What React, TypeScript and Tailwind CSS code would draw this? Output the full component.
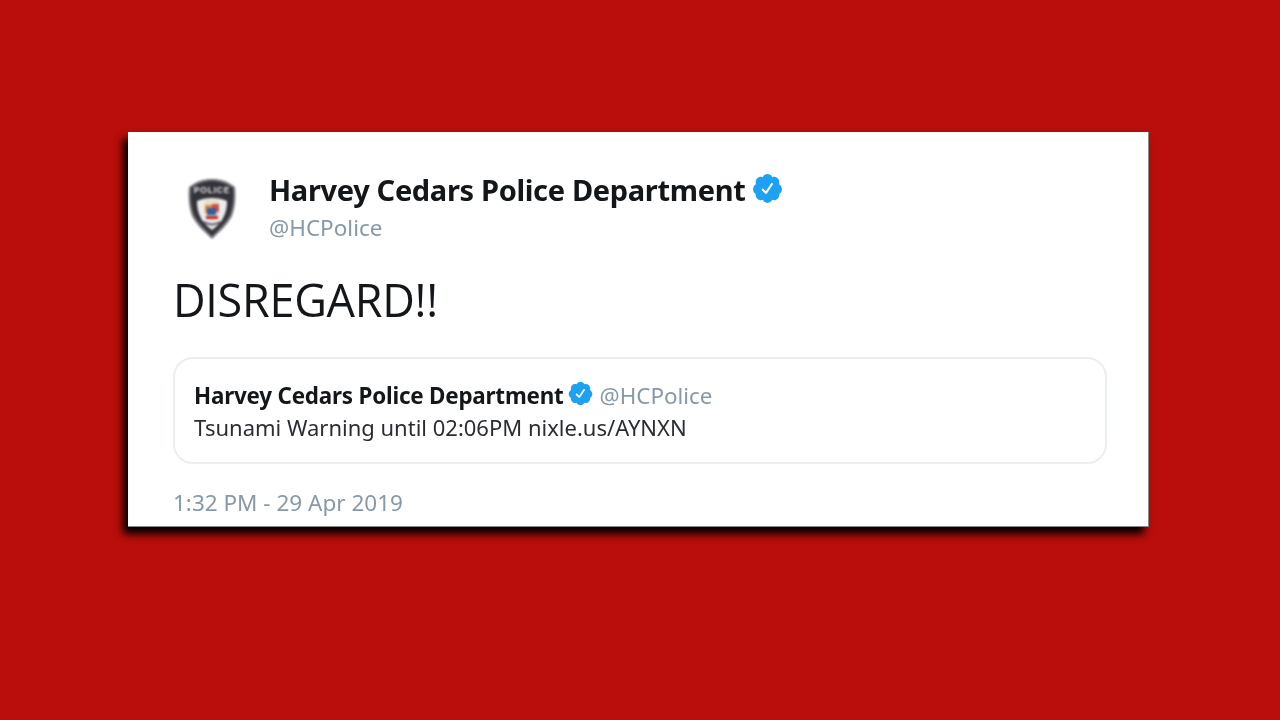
const BADGE = "M22.5 12.5c0-1.58-.875-2.95-2.148-3.6.154-.435.238-.905.238-1.4 0-2.21-1.71-3.998-3.818-3.998-.47 0-.92.084-1.336.25C14.818 2.415 13.51 1.5 12 1.5s-2.816.917-3.437 2.25c-.415-.165-.866-.25-1.336-.25-2.11 0-3.818 1.79-3.818 4 0 .494.083.964.237 1.4-1.272.65-2.147 2.018-2.147 3.6 0 1.495.782 2.798 1.942 3.486-.02.17-.032.34-.032.514 0 2.21 1.708 4 3.818 4 .47 0 .92-.086 1.335-.25.62 1.334 1.926 2.25 3.437 2.25 1.512 0 2.818-.916 3.437-2.25.415.163.865.248 1.336.248 2.11 0 3.818-1.79 3.818-4 0-.174-.012-.344-.033-.513 1.158-.687 1.943-1.99 1.943-3.484zm-6.616-3.334l-4.334 6.5c-.145.217-.382.334-.625.334-.143 0-.288-.04-.416-.126l-.115-.094-2.415-2.415c-.293-.293-.293-.768 0-1.06s.768-.294 1.06 0l1.77 1.767 3.825-5.74c.23-.345.696-.436 1.04-.207.346.23.44.696.21 1.04z";

function Badge({ className }: { className: string }) {
  return (
    <svg viewBox="0 0 24 24" className={className} fill="#1da1f2">
      <path d={BADGE} />
    </svg>
  );
}

function Shield() {
  return (
    <svg viewBox="0 0 50 62" className="w-[50px] h-[62px] blur-[0.8px]">
      <path d="M2 9 C10 3 16 1 25 1 C34 1 40 3 48 9 C49 20 48 30 45 38 C40 48 32 54 25 61 C18 54 10 48 5 38 C2 30 1 20 2 9Z" fill="#77777c" />
      <path d="M4 10 C12 5 18 3 25 3 C32 3 38 5 46 10 C47 20 46 29 43 37 C38 46 31 52 25 58 C19 52 12 46 7 37 C4 29 3 20 4 10Z" fill="#33333a" />
      <path d="M10 23 C18 19 32 19 40 23 C40 31 38 37 35 42 C32 46 29 49 25 52 C21 49 18 46 15 42 C12 37 10 31 10 23Z" fill="#ececec" />
      <path d="M18 22 H32 V37 C30 41 28 42 25 43 C22 42 20 41 18 37Z" fill="#e6dfc8" />
      <rect x="18" y="27" width="7" height="8" fill="#d9893a" />
      <rect x="25" y="26" width="7" height="8" fill="#c8504a" />
      <rect x="20" y="30" width="9" height="7" fill="#2f5f9e" />
      <rect x="19" y="38" width="12" height="3" fill="#c8242c" />
      <path d="M17 44 Q25 49 33 44" stroke="#55555a" strokeWidth="2" fill="none" />
      <text x="25" y="15" textAnchor="middle" fill="#e6e6e6" fontSize="8.5" fontWeight="700" fontFamily="'Liberation Sans', sans-serif" letterSpacing="0.8">POLICE</text>
    </svg>
  );
}

export default function App() {
  return (
    <div className="w-[1280px] h-[720px] overflow-hidden bg-[#b90e0b] pt-[132px] pl-[128px] font-['Noto_Sans','Open_Sans',sans-serif]">
      <div className="w-[1021px] h-[395px] bg-white border-r border-b border-[#8a8a8a] shadow-[-5px_7px_8px_#000] pl-[45px] pr-[41px] flex flex-col">
        <div className="flex items-start mt-[43px] h-[78px] blur-[0.5px]">
          <div className="w-[50px] ml-[14px] mt-[3px] shrink-0">
            <Shield />
          </div>
          <div className="flex flex-col ml-[32px] mt-[-1px]">
            <div className="flex items-center">
              <span className="text-[29px] leading-[32px] font-bold text-[#14171a] tracking-[-0.33px]">Harvey Cedars Police Department</span>
              <Badge className="w-[33px] h-[33px] ml-[6px] mt-[-4px]" />
            </div>
            <span className="text-[22.5px] leading-[30px] text-[#8899a6] mt-[7px]">@HCPolice</span>
          </div>
        </div>
        <div className="text-[45px] leading-[56px] tracking-[-0.3px] text-[#14171a] mt-[19px] blur-[0.5px] font-['Open_Sans',sans-serif]">DISREGARD!!</div>
        <div className="mt-[29px] w-[934px] h-[107px] border-2 border-[#eaeff3] rounded-[20px] px-[19px] pt-[20px] blur-[0.4px]">
          <div className="flex items-center h-[32px] mt-[1px]">
            <span className="text-[22.4px] leading-[32px] font-bold text-[#14171a] tracking-[-0.2px]">Harvey Cedars Police Department</span>
            <Badge className="w-[27px] h-[27px] ml-[3px] mt-[-5px]" />
            <span className="text-[22.4px] leading-[32px] text-[#8899a6] ml-[6px]">@HCPolice</span>
          </div>
          <div className="text-[22px] leading-[30px] text-[#2a2e33]">Tsunami Warning until 02:06PM nixle.us/AYNXN</div>
        </div>
        <div className="text-[22.5px] leading-[30px] text-[#8899a6] mt-[24px] blur-[0.4px]">1:32 PM - 29 Apr 2019</div>
      </div>
    </div>
  );
}
